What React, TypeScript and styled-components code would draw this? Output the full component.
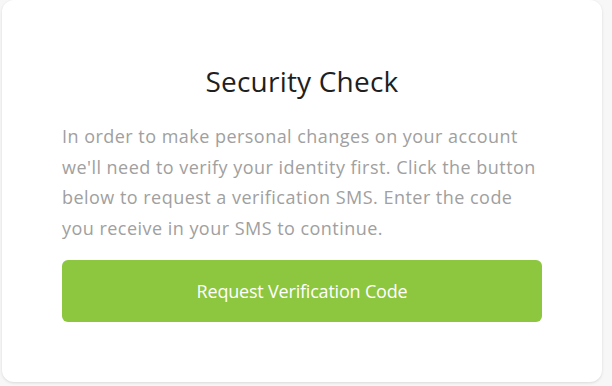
import styled, { createGlobalStyle } from "styled-components";

const GlobalStyle = createGlobalStyle`
  html, body {
    margin: 0;
    padding: 0;
    background: #f7f7f7;
  }
  body {
    font-family: "Segoe UI", "Open Sans", sans-serif;
  }
`

const Page = styled.div`
  padding: 0 0 0 2px;
  height: 386px;
  box-sizing: border-box;
`

const Card = styled.div`
  width: 600px;
  box-sizing: border-box;
  background: #ffffff;
  border-radius: 12px;
  box-shadow: 0 1px 3px rgba(0, 0, 0, 0.12);
  padding: 64px 60px 60px;
  display: flex;
  flex-direction: column;
`

const Title = styled.h2`
  margin: 0;
  font-size: 28px;
  line-height: 34px;
  font-weight: 400;
  color: #1f1f1f;
  text-align: center;
  letter-spacing: 0.2px;
`

const Text = styled.p`
  margin: 23px 0 0;
  font-size: 18px;
  line-height: 30.6px;
  color: #a0a0a0;
  letter-spacing: 0.47px;
`

const Button = styled.button`
  margin-top: 17px;
  height: 62px;
  width: 100%;
  border: none;
  border-radius: 6px;
  background: #8dc63f;
  color: #ffffff;
  font-family: inherit;
  font-size: 18px;
  letter-spacing: -0.2px;
  cursor: pointer;
`

export default function App() {
  return (
    <>
      <GlobalStyle />
      <Page>
        <Card>
          <Title>Security Check</Title>
          <Text>
            In order to make personal changes on your account we'll need to verify your identity
            first. Click the button below to request a verification SMS. Enter the code you receive
            in your SMS to continue.
          </Text>
          <Button>Request Verification Code</Button>
        </Card>
      </Page>
    </>
  )
}
